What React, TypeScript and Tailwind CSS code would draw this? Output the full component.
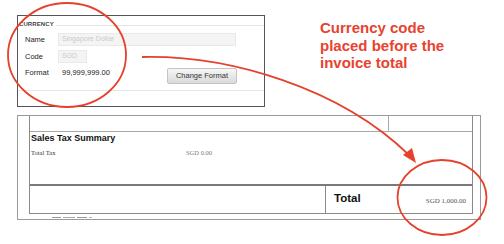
import React from "react";

function CurrencyPanel() {
  return (
    <div className="w-[248px] h-[92px] shrink-0 border border-[#555] bg-white">
      {/* legend */}
      <div className="flex items-center pt-[4px] pl-[1px]">
        <span className="text-[6px] leading-[8px] font-bold text-[#444] tracking-[0.1px]">CURRENCY</span>
        <div className="flex-1 h-px mt-[2px] ml-[2px] bg-[#e4e4e4]" />
      </div>

      <div className="flex items-center mt-[5px] pl-[7px] h-[13px]">
        <span className="w-[33px] text-[7.5px] text-[#222]">Name</span>
        <div className="w-[178px] h-[13px] flex items-center pl-[3px] bg-[#f4f4f4] border border-[#e9e9e9] text-[7px] text-[#cacaca]">
          Singapore Dollar
        </div>
      </div>

      <div className="flex items-center mt-[4px] pl-[7px] h-[13px]">
        <span className="w-[33px] text-[7.5px] text-[#222]">Code</span>
        <div className="w-[29px] h-[13px] flex items-center pl-[3px] bg-[#f4f4f4] border border-[#e9e9e9] text-[7px] text-[#cacaca]">
          SGD
        </div>
      </div>

      <div className="flex items-start mt-[4px] pl-[7px] h-[17px]">
        <span className="w-[33px] pt-[1px] text-[7.5px] leading-[9px] text-[#222]">Format</span>
        <span className="w-[109px] pl-[4px] pt-[1px] text-[7.5px] leading-[9px] text-[#222]">99,999,999.00</span>
        <button
          type="button"
          className="w-[70px] h-[16px] mt-[1px] rounded-[2px] border border-[#c4c4c4] bg-gradient-to-b from-[#f7f7f7] to-[#dadada] text-[7.5px] text-[#333]"
        >
          Change Format
        </button>
      </div>

      <div className="h-px mt-[6px] bg-[#e6e6e6]" />
    </div>
  );
}

function InvoiceTable() {
  return (
    <div className="mt-[8px] ml-[17px] w-[464px] h-[105px] border border-[#9a9a9a] bg-white">
      <div className="ml-[11px] w-[444px] h-[98px] border-l border-r border-b border-[#8a8a8a] flex flex-col">
        {/* blank header row */}
        <div className="flex h-[16px] border-b border-[#a8a8a8]">
          <div className="w-[359px] border-r border-[#a8a8a8]" />
          <div className="flex-1" />
        </div>

        {/* sales tax summary */}
        <div className="h-[54px] border-b-2 border-[#7a7a7a] pl-[1px] pt-[1px]">
          <div className="text-[9px] leading-[11px] font-bold text-[#111]">Sales Tax Summary</div>
          <div className="flex mt-[5px] font-['Liberation_Serif','Times_New_Roman',serif] text-[6.5px] leading-[8px]">
            <span className="w-[155px] text-[#333]">Total Tax</span>
            <span className="text-[#777]">SGD 0.00</span>
          </div>
        </div>

        {/* total row */}
        <div className="flex flex-1">
          <div className="w-[296px] border-r border-[#8a8a8a]" />
          <div className="flex flex-1 items-center justify-between pl-[8px] pr-[6px]">
            <span className="text-[11.5px] font-bold text-[#111] -mt-[2px]">Total</span>
            <span className="mt-[3px] font-['Liberation_Serif','Times_New_Roman',serif] text-[7px] text-[#555]">
              SGD 1,000.00
            </span>
          </div>
        </div>
      </div>
      {/* tops of a line cut off by the crop */}
      <div className="flex gap-[2px] pl-[34px] pt-[3px]">
        <div className="w-[9px] h-px bg-[#999]" />
        <div className="w-[12px] h-px bg-[#aaa]" />
        <div className="w-[10px] h-px bg-[#999]" />
        <div className="w-[3px] h-px bg-[#bbb]" />
      </div>
    </div>
  );
}

function Annotations() {
  return (
    <svg
      className="absolute inset-0 pointer-events-none"
      width="504"
      height="244"
      viewBox="0 0 504 244"
      fill="none"
    >
      <ellipse cx="67" cy="55" rx="59" ry="52" stroke="#e5412d" strokeWidth="1.8" />
      <ellipse cx="442" cy="197.5" rx="44.5" ry="37.5" stroke="#e5412d" strokeWidth="1.8" />
      <path d="M142 57 C 230 55, 340 88, 409 155" stroke="#e5412d" strokeWidth="1.8" />
      <polygon points="416,163 403,155 412,148" fill="#e5412d" />
    </svg>
  );
}

export default function App() {
  return (
    <div className="relative w-[504px] h-[244px] overflow-hidden bg-white font-['Liberation_Sans',Arial,sans-serif]">
      <div className="flex pt-[15px] pl-[17px]">
        <CurrencyPanel />
        <div className="ml-[55px] mt-[4px] text-[15px] leading-[17.5px] font-bold text-[#e8432f]">
          Currency code
          <br />
          placed before the
          <br />
          invoice total
        </div>
      </div>
      <InvoiceTable />
      <Annotations />
    </div>
  );
}
